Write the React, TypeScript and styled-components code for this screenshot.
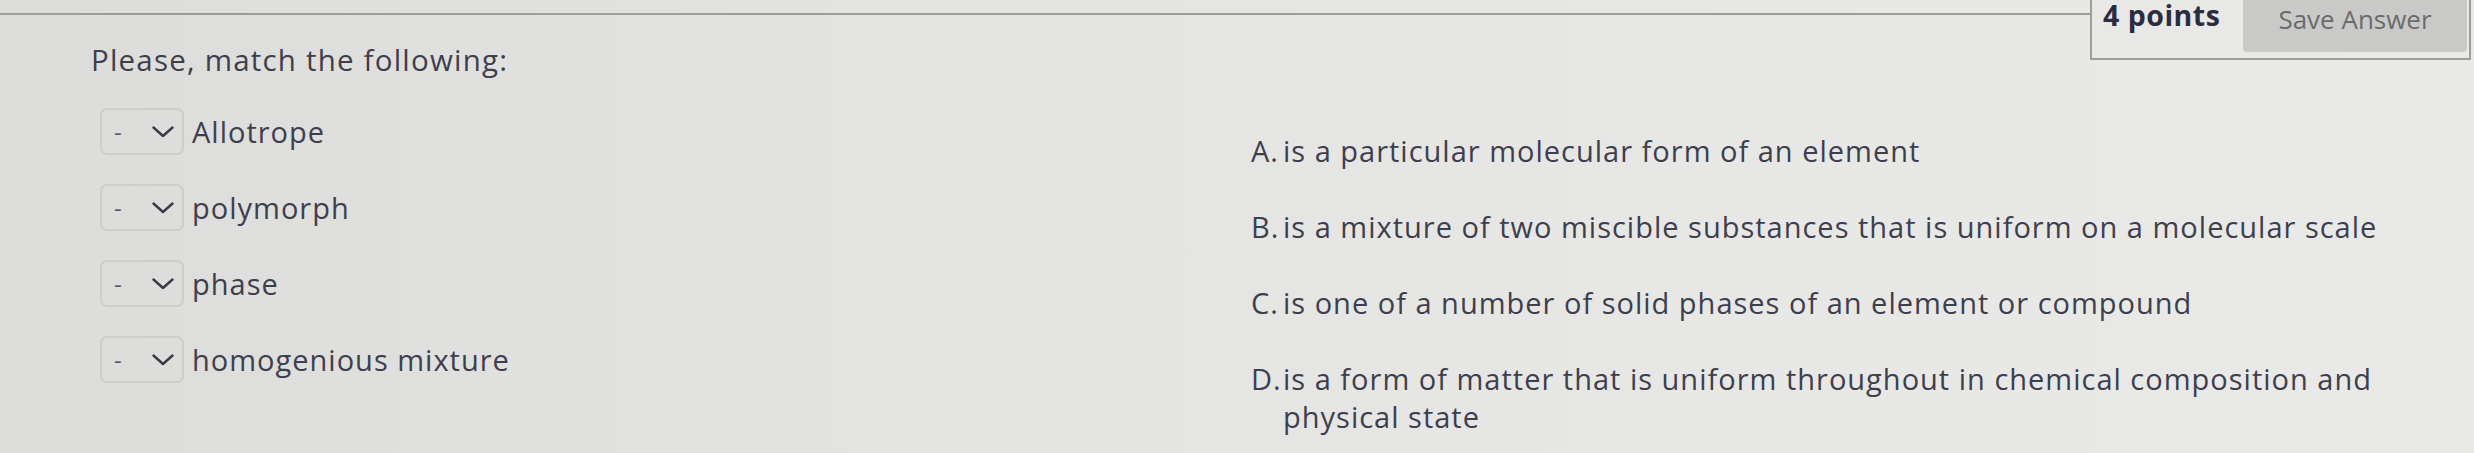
import React from 'react';
import styled, { createGlobalStyle } from 'styled-components';

const GlobalStyle = createGlobalStyle`
  html, body {
    margin: 0;
    padding: 0;
  }
  body {
    width: 2474px;
    height: 453px;
    overflow: hidden;
    font-family: "Open Sans", "Liberation Sans", sans-serif;
    color: #3e3e4c;
    background: linear-gradient(90deg, #dcddda 0%, #e3e4e1 35%, #e7e8e6 70%, #e9eae8 100%);
  }
`;

const Page = styled.div`
  width: 2474px;
  height: 453px;
  display: flex;
  flex-direction: column;
`;

const TopRow = styled.div`
  display: flex;
  align-items: flex-start;
`;

const HeaderLeft = styled.div`
  flex: 1;
  display: flex;
  flex-direction: column;
`;

const Rule = styled.div`
  height: 13px;
  border-bottom: 2px solid #9d9e9c;
`;

const Prompt = styled.h1`
  margin: 25px 0 0 91px;
  font-size: 29.5px;
  font-weight: 400;
  letter-spacing: 1.2px;
  line-height: 40px;
`;

const PointsBox = styled.div`
  box-sizing: border-box;
  width: 381px;
  height: 60px;
  margin-right: 3px;
  display: flex;
  align-items: flex-start;
  justify-content: space-between;
  border: 2px solid #9d9e9c;
  border-top: none;
  padding-left: 11px;
`;

const Points = styled.span`
  font-size: 28.5px;
  font-weight: 700;
  letter-spacing: 0.5px;
  line-height: 30px;
  color: #2c2c40;
`;

const SaveButton = styled.button`
  width: 224px;
  height: 52px;
  margin-right: 2px;
  border: none;
  border-radius: 0 0 4px 4px;
  background: #c9cac8;
  color: #6b6b6d;
  font-family: "Open Sans", "Liberation Sans", sans-serif;
  font-size: 26px;
  line-height: 36px;
  padding: 0 0 14px;
`;

const Columns = styled.div`
  display: flex;
  align-items: flex-start;
`;

const Prompts = styled.ul`
  list-style: none;
  margin: 28px 0 0 100px;
  padding: 0;
  width: 1151px;
  display: flex;
  flex-direction: column;
  gap: 29px;
`;

const PromptRow = styled.li`
  display: flex;
  align-items: center;
  gap: 8px;
  height: 47px;
  font-size: 29px;
  letter-spacing: 1px;
`;

const Select = styled.div`
  box-sizing: border-box;
  width: 84px;
  height: 47px;
  border: 2px solid #cdcecb;
  border-radius: 7px;
  display: flex;
  align-items: center;
  justify-content: space-between;
  padding: 0 8px 0 12px;
  color: #5c5c62;
  font-size: 24px;
`;

const Answers = styled.ol`
  list-style: none;
  margin: 52px 0 0 0;
  padding: 0;
  width: 1185px;
  display: flex;
  flex-direction: column;
  gap: 38px;
`;

const AnswerRow = styled.li`
  display: flex;
  gap: 5px;
  font-size: 29px;
  letter-spacing: 1px;
  line-height: 38px;
`;

const Letter = styled.span`
  flex: none;
  width: 27px;
`;

const Chevron = () => (
  <svg width="22" height="12" viewBox="0 0 22 12" fill="none">
    <polyline points="1.5,1.5 11,10 20.5,1.5" stroke="#3a3a48" strokeWidth="2.4" strokeLinecap="round" strokeLinejoin="round" />
  </svg>
);

const prompts = ['Allotrope', 'polymorph', 'phase', 'homogenious mixture'];

const answers = [
  ['A.', 'is a particular molecular form of an element'],
  ['B.', 'is a mixture of two miscible substances that is uniform on a molecular scale'],
  ['C.', 'is one of a number of solid phases of an element or compound'],
  ['D.', 'is a form of matter that is uniform throughout in chemical composition and physical state'],
];

const App: React.FC = () => {
  return (
    <Page>
      <GlobalStyle />
      <TopRow>
        <HeaderLeft>
          <Rule />
          <Prompt>Please, match the following:</Prompt>
        </HeaderLeft>
        <PointsBox>
          <Points>4 points</Points>
          <SaveButton>Save Answer</SaveButton>
        </PointsBox>
      </TopRow>

      <Columns>
        <Prompts>
          {prompts.map((p) => (
            <PromptRow key={p}>
              <Select>
                <span>-</span>
                <Chevron />
              </Select>
              {p}
            </PromptRow>
          ))}
        </Prompts>

        <Answers>
          {answers.map(([letter, text]) => (
            <AnswerRow key={letter}>
              <Letter>{letter}</Letter>
              <span>{text}</span>
            </AnswerRow>
          ))}
        </Answers>
      </Columns>
    </Page>
  );
};

export default App;
